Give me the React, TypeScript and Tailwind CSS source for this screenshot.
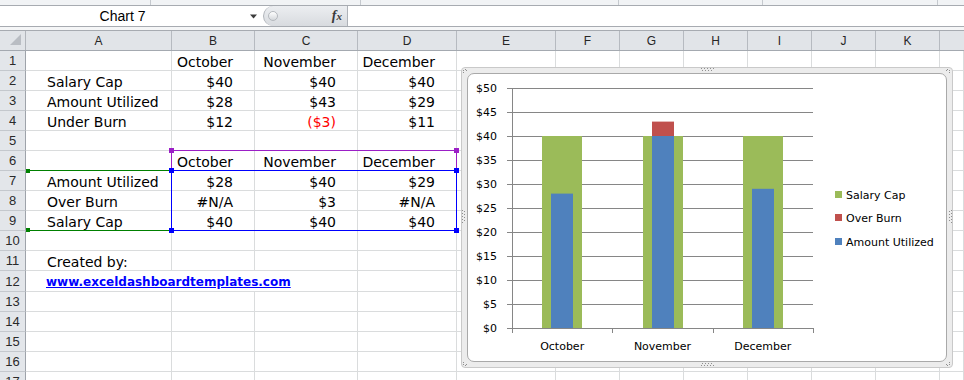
import React from 'react';

type Row = {
  n: number;
  tall?: boolean;
  a?: string;
  b?: string;
  c?: string;
  d?: string;
  redC?: boolean;
  link?: string;
};

const rows: Row[] = [
  { n: 1, b: 'October', c: 'November', d: 'December' },
  { n: 2, a: 'Salary Cap', b: '$40', c: '$40', d: '$40' },
  { n: 3, a: 'Amount Utilized', b: '$28', c: '$43', d: '$29' },
  { n: 4, a: 'Under Burn', b: '$12', c: '($3)', d: '$11', redC: true },
  { n: 5 },
  { n: 6, b: 'October', c: 'November', d: 'December' },
  { n: 7, a: 'Amount Utilized', b: '$28', c: '$40', d: '$29' },
  { n: 8, a: 'Over Burn', b: '#N/A', c: '$3', d: '#N/A' },
  { n: 9, a: 'Salary Cap', b: '$40', c: '$40', d: '$40' },
  { n: 10 },
  { n: 11, a: 'Created by:' },
  { n: 12, tall: true, link: 'www.exceldashboardtemplates.com' },
  { n: 13 },
  { n: 14 },
  { n: 15 },
  { n: 16 },
  { n: 17 },
];

const headers = [
  { label: 'A', w: 'w-[146px]' },
  { label: 'B', w: 'w-[83px]' },
  { label: 'C', w: 'w-[103px]' },
  { label: 'D', w: 'w-[99px]' },
  { label: 'E', w: 'w-[99px]' },
  { label: 'F', w: 'w-[64px]' },
  { label: 'G', w: 'w-[64px]' },
  { label: 'H', w: 'w-[64px]' },
  { label: 'I', w: 'w-[64px]' },
  { label: 'J', w: 'w-[64px]' },
  { label: 'K', w: 'w-[64px]' },
  { label: '', w: 'flex-1' },
];

const emptyCols = ['w-[99px]', 'w-[64px]', 'w-[64px]', 'w-[64px]', 'w-[64px]', 'w-[64px]', 'w-[64px]', 'flex-1'];

const NumCell = ({ w, text, red, noRight }: { w: string; text?: string; red?: boolean; noRight?: boolean }) => (
  <div
    className={`${w} shrink-0 flex items-end justify-end pr-[21px] whitespace-nowrap border-b border-[#dadcdd] ${noRight ? '' : 'border-r'}`}
  >
    {text && <span className={`leading-[16px] ${red ? 'text-[#ff0000]' : ''}`}>{text}</span>}
  </div>
);

const SheetRow = ({ row }: { row: Row }) => (
  <div className={`flex shrink-0 ${row.tall ? 'h-[21px]' : 'h-[20px]'}`}>
    <div className="w-[26px] shrink-0 flex items-center justify-center pt-[1px] bg-[#e3e6ea] border-r border-b border-r-[#9ea3aa] border-b-[#c4c8cd] font-['Liberation_Sans'] text-[13px] text-[#2a2a2a]">
      {row.n}
    </div>
    <div
      className={`w-[146px] shrink-0 flex items-end pl-[21px] whitespace-nowrap border-b border-[#dadcdd] ${row.link ? 'pb-[1px]' : 'border-r'}`}
    >
      {row.a && <span className="leading-[16px]">{row.a}</span>}
      {row.link && (
        <a href="#" className="leading-[16px] text-[12px] font-bold text-[#0000ff] underline -ml-[1px]">
          {row.link}
        </a>
      )}
    </div>
    <NumCell w="w-[83px]" text={row.b} noRight={!!row.link} />
    <NumCell w="w-[103px]" text={row.c} red={row.redC} />
    <NumCell w="w-[99px]" text={row.d} />
    {emptyCols.map((w, i) => (
      <div key={i} className={`${w} shrink-0 border-b border-r border-[#dadcdd]`} />
    ))}
  </div>
);

const Y_TICKS = [50, 45, 40, 35, 30, 25, 20, 15, 10, 5, 0];
const yOf = (v: number) => 328 - v * 4.8;
const cats = [
  { name: 'October', cap: 40, used: 28, over: 0 },
  { name: 'November', cap: 40, used: 40, over: 3 },
  { name: 'December', cap: 40, used: 29, over: 0 },
];
const catW = 301 / 3;
const legend = [
  { name: 'Salary Cap', color: '#9bbb59', y: 191 },
  { name: 'Over Burn', color: '#c0504d', y: 214 },
  { name: 'Amount Utilized', color: '#4f81bd', y: 238 },
];

const Chart = () => (
  <svg width={478} height={287} viewBox="468 74 478 287" className="block" fontFamily="'DejaVu Sans', sans-serif" fontSize={11}>
    {Y_TICKS.map((v) => (
      <line key={v} x1={507} x2={813} y1={yOf(v) + 0.5} y2={yOf(v) + 0.5} stroke="#868686" />
    ))}
    {cats.map((c, i) => {
      const cx = 512 + catW * (i + 0.5);
      return (
        <g key={c.name}>
          <rect x={Math.round(cx - 20)} y={yOf(c.cap)} width={40} height={328 - yOf(c.cap)} fill="#9bbb59" />
          <rect x={Math.round(cx - 11)} y={yOf(c.used)} width={22} height={328 - yOf(c.used)} fill="#4f81bd" />
          {c.over > 0 && (
            <rect x={Math.round(cx - 11)} y={yOf(c.used + c.over)} width={22} height={c.over * 4.8} fill="#c0504d" />
          )}
          <text x={cx} y={350} textAnchor="middle" fill="#000">
            {c.name}
          </text>
        </g>
      );
    })}
    <line x1={512.5} x2={512.5} y1={88} y2={329} stroke="#868686" />
    <line x1={507} x2={814} y1={328.5} y2={328.5} stroke="#868686" />
    {[0, 1, 2, 3].map((i) => {
      const x = Math.round(512 + catW * i) + 0.5;
      return <line key={i} x1={x} x2={x} y1={328} y2={333} stroke="#868686" />;
    })}
    {Y_TICKS.map((v) => (
      <text key={v} x={497} y={yOf(v) + 4} textAnchor="end" fill="#000">
        ${v}
      </text>
    ))}
    {legend.map((l) => (
      <g key={l.name}>
        <rect x={835} y={l.y} width={7} height={7} fill={l.color} />
        <text x={846} y={l.y + 7.5} fill="#000">
          {l.name}
        </text>
      </g>
    ))}
  </svg>
);

const dots = (pts: [number, number][]) =>
  pts.map(([x, y], i) => <rect key={i} x={x} y={y} width={1} height={1} fill="#8f8f8f" />);

const Grips = () => (
  <svg className="absolute inset-0 pointer-events-none" width={490} height={299} viewBox="462 68 490 299">
    {dots([
      [701, 68], [704, 68], [707, 68], [710, 68], [713, 68],
      [702, 70], [705, 70], [708, 70], [711, 70],
      [701, 365], [704, 365], [707, 365], [710, 365], [713, 365],
      [702, 363], [705, 363], [708, 363], [711, 363],
      [462, 210], [462, 213], [462, 216], [462, 219], [462, 222],
      [464, 211], [464, 214], [464, 217], [464, 220],
      [951, 210], [951, 213], [951, 216], [951, 219], [951, 222],
      [949, 211], [949, 214], [949, 217], [949, 220],
      [463, 70], [466, 70], [463, 72], [465, 69],
      [949, 70], [946, 70], [949, 72], [947, 69],
      [463, 364], [466, 364], [463, 362], [465, 365],
      [949, 364], [946, 364], [949, 362], [947, 365],
    ])}
  </svg>
);

export default function App() {
  return (
    <div className="relative w-[964px] h-[380px] overflow-hidden bg-white font-['DejaVu_Sans'] text-[14px] text-black">
      {/* ribbon bottom edge */}
      <div className="flex h-[6px] bg-[#f1f3f5] border-b border-[#a7abb1]">
        <div className="w-[151px] border-r border-[#c5c9ce]" />
        <div className="w-[210px] border-r border-[#c5c9ce]" />
        <div className="w-[258px] border-r border-[#c5c9ce]" />
        <div className="w-[144px] border-r border-[#c5c9ce]" />
        <div className="w-[175px] border-r border-[#c5c9ce]" />
      </div>

      {/* formula bar */}
      <div className="flex h-[21px] border-b border-[#a7abb1] bg-white">
        <div className="w-[263px] flex items-center">
          <div className="flex-1 text-center font-['Liberation_Sans'] text-[14px] leading-none">Chart 7</div>
          <svg width={18} height={6} viewBox="0 0 18 6" className="block">
            <path d="M5 1.5h7l-3.5 4z" fill="#3c3c3c" />
          </svg>
        </div>
        <div className="w-[85px] flex items-center justify-between rounded-l-[10px] border-l border-r border-[#aeb2b8] bg-gradient-to-b from-[#eceef1] to-[#d8dbdf]">
          <div className="ml-[4px] w-[10px] h-[10px] rounded-full border border-[#b5b9be] bg-gradient-to-b from-white to-[#d5d8dc]" />
          <span className="mr-[5px] font-['Liberation_Serif'] italic font-bold text-[14px] leading-none text-[#3a3a3a]">
            f<span className="text-[11px]">x</span>
          </span>
        </div>
        <div className="flex-1 bg-white" />
      </div>
      <div className="h-[4px] bg-[#f5f6f7] border-b border-[#a7abb1]" />

      {/* column headers */}
      <div className="flex h-[20px] bg-[#e1e4e8] border-b border-[#a4a9b0] font-['Liberation_Sans'] text-[12px] text-[#262626]">
        <div className="w-[26px] shrink-0 flex items-end justify-end pr-[4px] pb-[5px] border-r border-[#b1b5bb]">
          <div className="w-0 h-0 border-l-[11px] border-l-transparent border-b-[11px] border-b-[#b9bdc3]" />
        </div>
        {headers.map((h, i) => (
          <div
            key={i}
            className={`${h.w} shrink-0 flex items-center justify-center pt-[1px] ${h.label ? 'border-r border-[#b6bac0]' : ''}`}
          >
            {h.label}
          </div>
        ))}
      </div>

      {/* rows */}
      <div className="flex flex-col">
        {rows.map((r) => (
          <SheetRow key={r.n} row={r} />
        ))}
      </div>

      {/* series range highlights */}
      <div className="absolute left-[171px] top-[150px] w-[286px] h-[21px] border border-[#9b1fc6]" />
      <div className="absolute left-[169px] top-[148px] w-[5px] h-[5px] bg-[#9b1fc6]" />
      <div className="absolute left-[454px] top-[148px] w-[5px] h-[5px] bg-[#9b1fc6]" />
      <div className="absolute left-[26px] top-[170px] w-[146px] h-[1px] bg-[#008000]" />
      <div className="absolute left-[26px] top-[230px] w-[146px] h-[1px] bg-[#008000]" />
      <div className="absolute left-[26px] top-[169px] w-[4px] h-[4px] bg-[#008000]" />
      <div className="absolute left-[26px] top-[228px] w-[4px] h-[4px] bg-[#008000]" />
      <div className="absolute left-[171px] top-[170px] w-[286px] h-[61px] border border-[#0000ff]" />
      <div className="absolute left-[169px] top-[168px] w-[5px] h-[5px] bg-[#0000ff]" />
      <div className="absolute left-[454px] top-[168px] w-[5px] h-[5px] bg-[#0000ff]" />
      <div className="absolute left-[169px] top-[228px] w-[5px] h-[5px] bg-[#0000ff]" />
      <div className="absolute left-[454px] top-[228px] w-[5px] h-[5px] bg-[#0000ff]" />

      {/* embedded chart */}
      <div className="absolute left-[461px] top-[67px] w-[492px] h-[301px] rounded-[4px] border border-[#c9c9c9] bg-[#ececec] p-[5px]">
        <div className="h-full w-full rounded-[7px] border border-[#a9a9a9] bg-white">
          <Chart />
        </div>
        <Grips />
      </div>
    </div>
  );
}
